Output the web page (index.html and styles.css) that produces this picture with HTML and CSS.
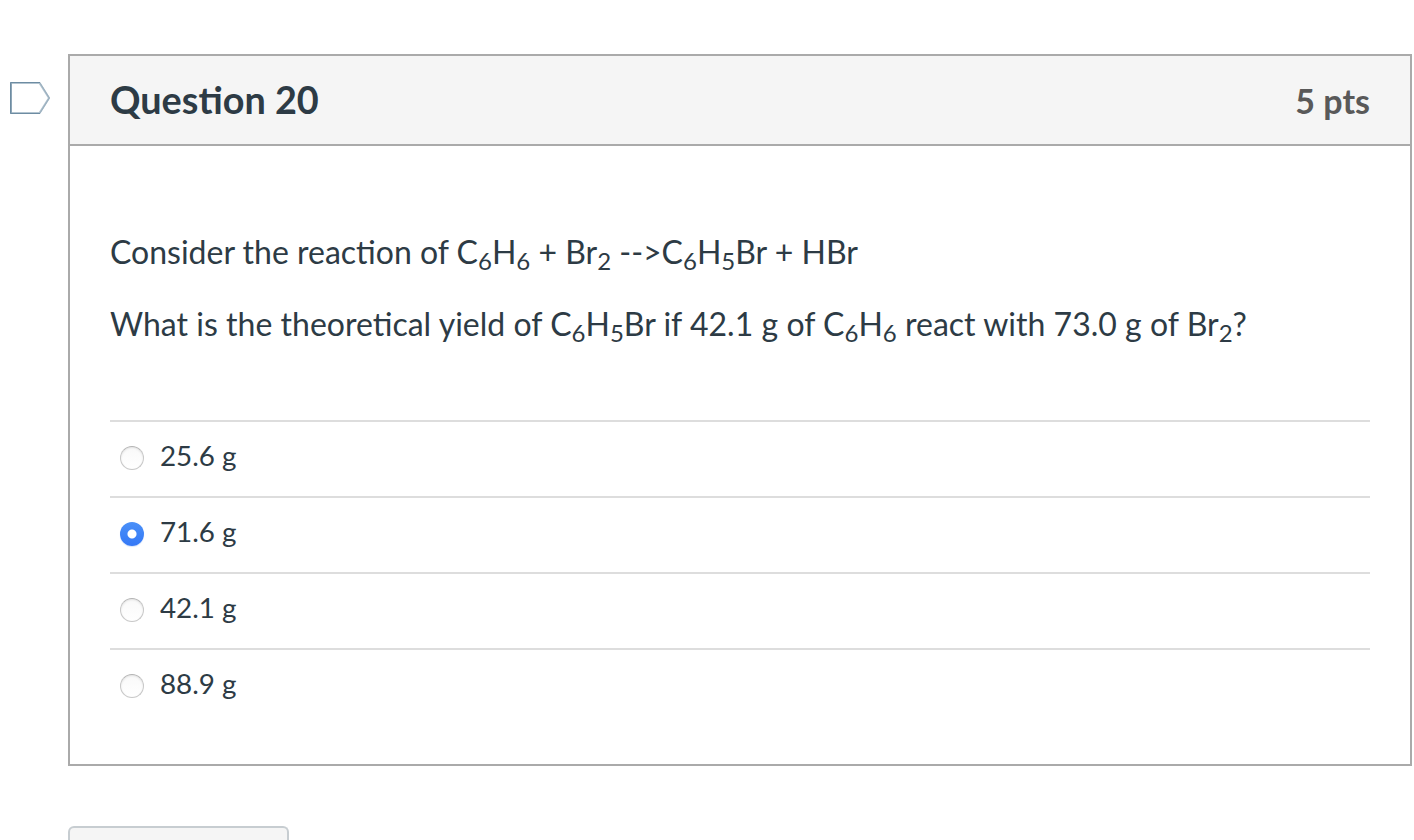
FILE: index.html
```html
<!DOCTYPE html>
<html lang="en">
<head>
    <meta charset="UTF-8">
    <meta name="viewport" content="width=device-width, initial-scale=1.0">
    <title>Question 20</title>
    <link rel="stylesheet" href="styles.css">
</head>
<body>
    <div class="quiz">
        <a class="flag" aria-label="Flag question">
            <svg width="42" height="34" viewBox="0 0 42 34">
                <path d="M2 2 H30.500 L40 17 L30.500 32 H2 Z" fill="none" stroke="#b3c4d0" stroke-width="2"/>
                <path d="M31 1.500 H1.500 V32.500 H31" fill="none" stroke="#6d8ca2" stroke-width="1"/>
                <path d="M2.500 2 V32" fill="none" stroke="#8ea6b7" stroke-width="1"/>
                <path d="M31 2 L40.300 17 L31 32" fill="none" stroke="#9bb0bf" stroke-width="1.200"/>
            </svg>
        </a>

        <div class="question">
            <div class="question-header">
                <h2>Question 20</h2>
                <span class="points">5 pts</span>
            </div>
            <div class="question-body">
                <p>Consider the reaction of C<sub>6</sub>H<sub>6</sub> + Br<sub>2</sub> --&gt;C<sub>6</sub>H<sub>5</sub>Br + HBr</p>
                <p>What is the theoretical yield of C<sub>6</sub>H<sub>5</sub>Br if 42.1 g of C<sub>6</sub>H<sub>6</sub> react with 73.0 g of Br<sub>2</sub>?</p>

                <div class="answers">
                    <label class="answer"><input type="radio" name="answer"><span>25.6 g</span></label>
                    <label class="answer"><input type="radio" name="answer" checked><span>71.6 g</span></label>
                    <label class="answer"><input type="radio" name="answer"><span>42.1 g</span></label>
                    <label class="answer"><input type="radio" name="answer"><span>88.9 g</span></label>
                </div>
            </div>
        </div>

        <button class="previous" type="button" aria-label="Previous"></button>
    </div>
</body>
</html>
```

FILE: styles.css
```css
* {
    box-sizing: border-box;
}

body {
    margin: 0;
    background: #fff;
    color: #2d3b45;
    font-family: Lato, "Liberation Sans", sans-serif;
}

.quiz {
    display: grid;
    grid-template-columns: 60px 1344px;
    column-gap: 8px;
    row-gap: 60px;
    padding-top: 54px;
}

.flag {
    padding: 27px 0 0 9px;
}

.flag svg {
    display: block;
}

.question {
    height: 712px;
    border: 2px solid #aaa;
}

.question-header {
    display: flex;
    align-items: center;
    justify-content: space-between;
    height: 90px;
    padding: 0 40px 2px;
    background: #f5f5f5;
    border-bottom: 2px solid #aaa;
}

.question-header h2 {
    margin: 0;
    padding-top: 2px;
    font-size: 37.8px;
    font-weight: bold;
    line-height: 60px;
}

.points {
    padding-top: 3px;
    color: #595959;
    font-size: 34px;
    font-weight: bold;
}

.question-body {
    padding: 82px 40px 0;
}

.question-body p {
    margin: 0 0 24px;
    font-size: 32px;
    line-height: 48px;
    white-space: nowrap;
}

.question-body p + p {
    word-spacing: 0.08px;
}

sub {
    position: relative;
    bottom: -0.25em;
    font-size: 75%;
    line-height: 0;
    vertical-align: baseline;
}

.answers {
    margin-top: 72px;
}

.answer {
    display: flex;
    height: 76px;
    padding: 24px 10px 0;
    border-top: 2px solid #ddd;
    font-size: 27.8px;
    line-height: 20px;
}

.answer input {
    appearance: none;
    width: 24px;
    height: 24px;
    margin: 0 16px 0 0;
    border: 1px solid #c8c8c8;
    border-top-color: #b4b4b4;
    border-radius: 50%;
    background: linear-gradient(#f9f9f9, #fff);
    box-shadow: inset 0 1px 2px #e2e2e2;
}

.answer input:checked {
    border: 0;
    background: radial-gradient(circle, #fff 4px, transparent 5px), linear-gradient(#4a90f8, #3478f6);
    box-shadow: 0 1px 1px #d6e4fb;
}

/* only the top edge of the button is in view */
.previous {
    grid-column: 2;
    width: 221px;
    height: 14px;
    border: 2px solid #c7cdd1;
    border-bottom: 0;
    border-radius: 6px 6px 0 0;
    background: #f5f5f5;
}
```
